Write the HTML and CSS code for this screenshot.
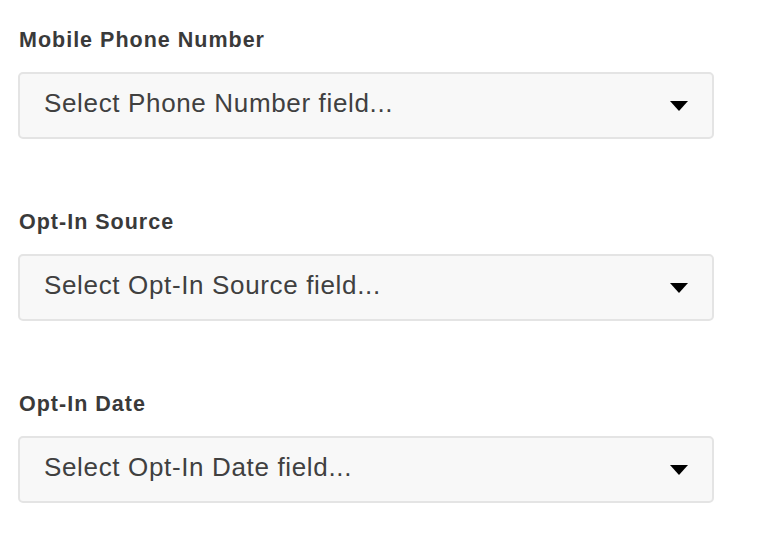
FILE: index.html
```html
<!DOCTYPE html>
<html>
<head>
<meta charset="utf-8">
<link rel="stylesheet" href="styles.css">
</head>
<body>
<div class="form">
  <div class="field">
    <div class="label">Mobile Phone Number</div>
    <div class="select">
      <span class="placeholder">Select Phone Number field...</span>
      <span class="caret"></span>
    </div>
  </div>
  <div class="field">
    <div class="label">Opt-In Source</div>
    <div class="select">
      <span class="placeholder">Select Opt-In Source field...</span>
      <span class="caret"></span>
    </div>
  </div>
  <div class="field">
    <div class="label">Opt-In Date</div>
    <div class="select">
      <span class="placeholder">Select Opt-In Date field...</span>
      <span class="caret"></span>
    </div>
  </div>
</div>
</body>
</html>
```
FILE: styles.css
```css
html, body {
  margin: 0;
  padding: 0;
  background: #ffffff;
}
body {
  font-family: "Liberation Sans", Arial, Helvetica, sans-serif;
}
.form {
  padding: 29px 0 0 18px;
  width: 696px;
  display: flex;
  flex-direction: column;
  gap: 72px;
}
.field {
  display: flex;
  flex-direction: column;
  gap: 20px;
}
.label {
  font-size: 21.5px;
  line-height: 23px;
  font-weight: bold;
  letter-spacing: 1px;
  color: #3a3a3a;
  padding-left: 1px;
}
.select {
  box-sizing: border-box;
  height: 67px;
  border: 2px solid #e4e4e4;
  border-radius: 5px;
  background: #f8f8f8;
  display: flex;
  align-items: center;
  justify-content: space-between;
  padding: 0 24px 0 24px;
}
.placeholder {
  font-size: 26px;
  letter-spacing: 0.65px;
  color: #404040;
  margin-top: -5px;
}
.caret {
  width: 0;
  height: 0;
  border-left: 9px solid transparent;
  border-right: 9px solid transparent;
  border-top: 10px solid #000;
}
```
